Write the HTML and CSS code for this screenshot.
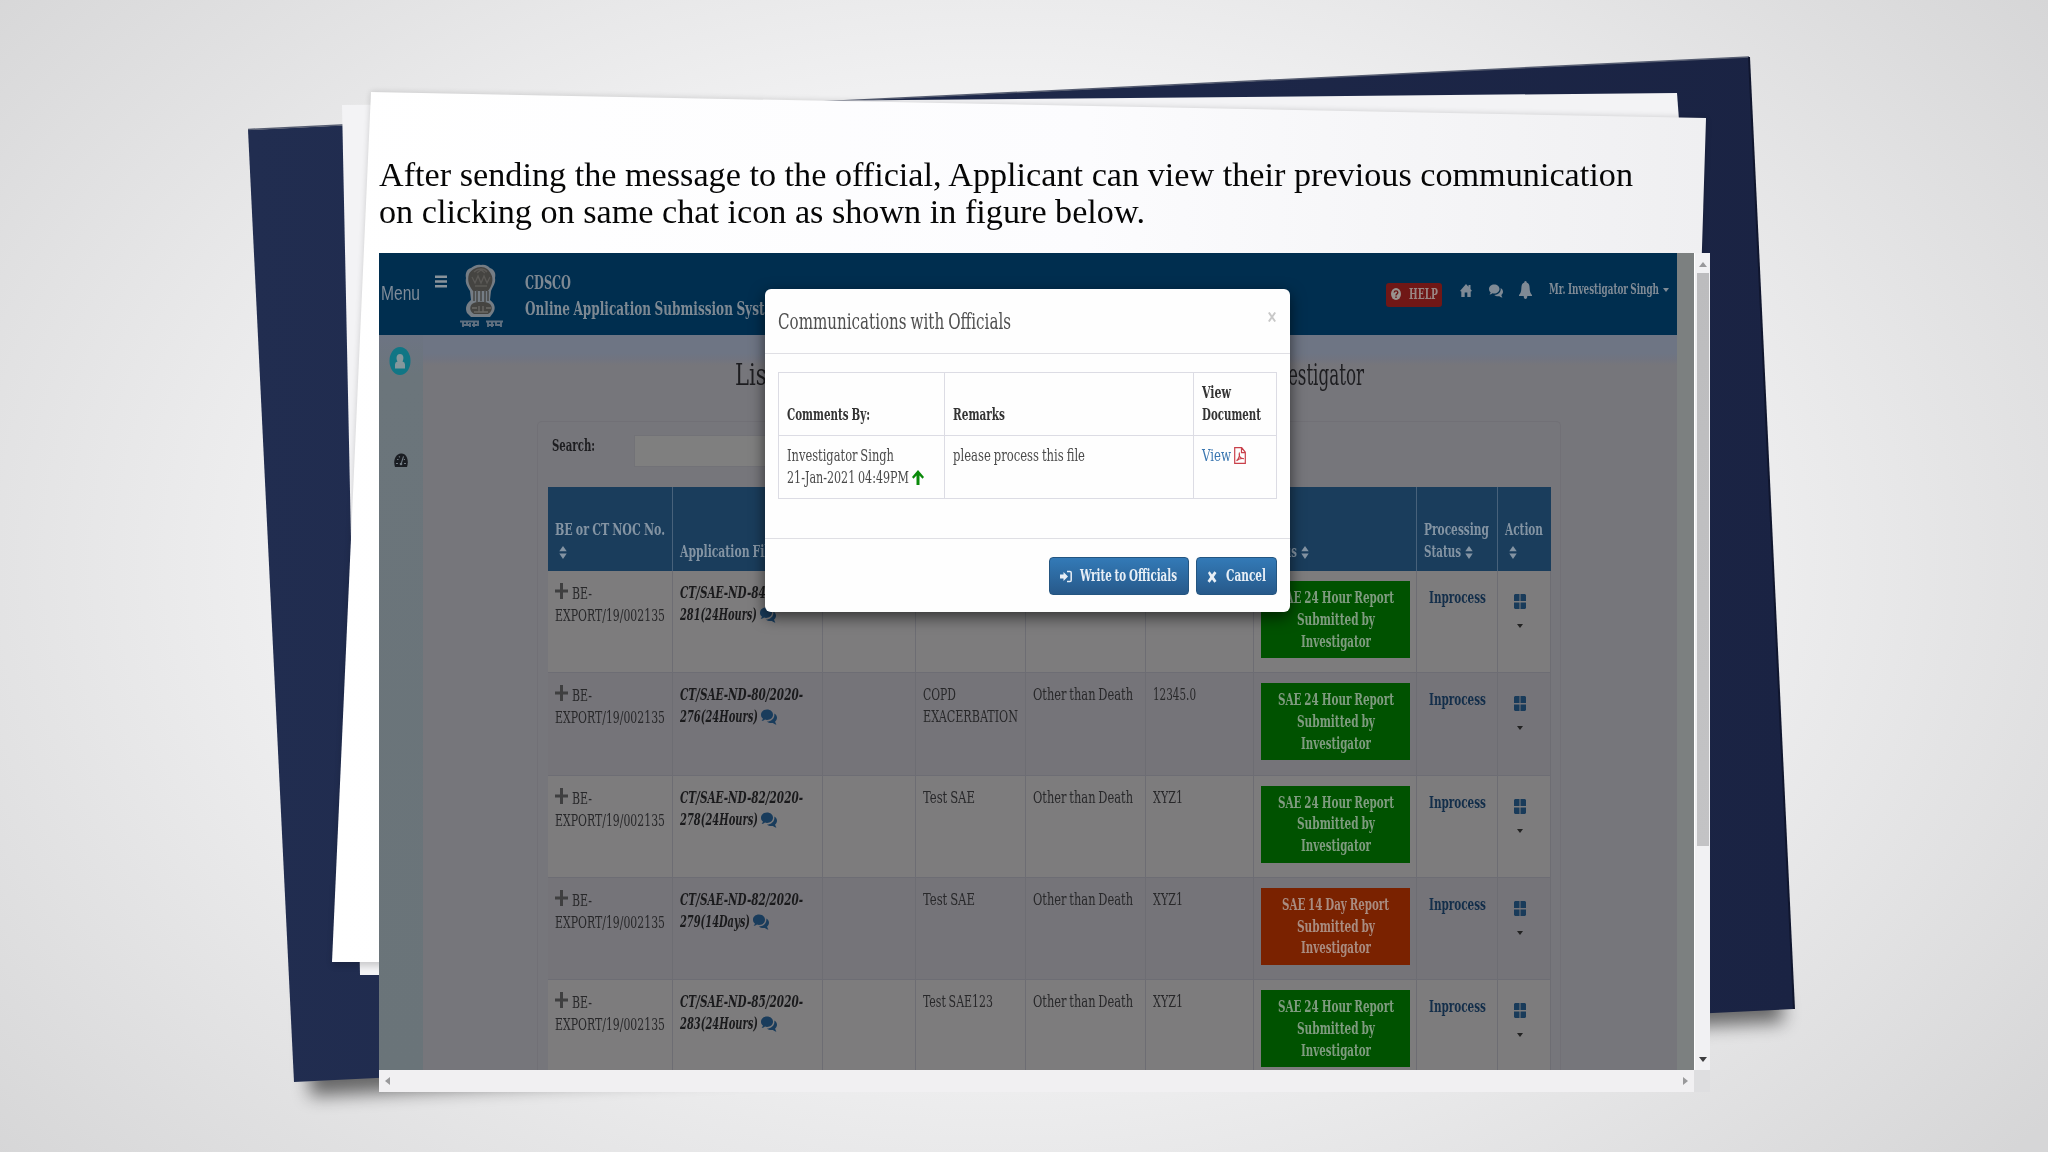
FILE: index.html
```html
<!DOCTYPE html>
<html lang="en">
<head>
<meta charset="utf-8">
<title>Communications with Officials</title>
<link rel="stylesheet" href="styles.css">
</head>
<body>
<svg width="0" height="0" class="defs">
  <symbol id="sort" viewBox="0 0 8 14"><path d="M4 0L8 5.6H0zM0 8.2h8L4 14z"/></symbol>
  <symbol id="plus" viewBox="0 0 13 16"><path d="M5 0h3v6.4h5v3.2H8V16H5V9.600H0V6.400h5z"/></symbol>
  <symbol id="chat" viewBox="0 0 16 16"><path d="M6 0.500c3.400 0 6 2.200 6 5.200s-2.600 5.200-6 5.200c-.7 0-1.400-.1-2-.3C3 11.500 1.700 12 .6 12c.7-.8 1.200-1.600 1.300-2.500C.7 8.600 0 7.300 0 5.700 0 2.700 2.600.5 6 .5z"/><path d="M13.200 4.500C15 5.500 16 7 16 8.800c0 1.500-.7 2.800-1.900 3.800.1.900.6 1.900 1.300 2.900-1.300-.1-2.500-.7-3.500-1.600-2 .5-4.400.1-5.900-1.400 4-.1 7.400-2.800 7.400-6.800 0-.4-.1-.8-.2-1.200z"/></symbol>
  <symbol id="grid" viewBox="0 0 12 15"><path d="M1 0h4.500v7H0V1zM6.500 0H11l1 1v6H6.500zM0 8.500h5.500V15H1l-1-1zM6.500 8.500H12V14l-1 1H6.500z"/></symbol>
</svg>
<main class="slide">
  <svg class="papers" viewBox="0 0 2048 1152">
    <defs>
      <linearGradient id="navy" x1="0" y1="0" x2="1" y2="0"><stop offset="0" stop-color="#212d50"/><stop offset="1" stop-color="#1a2343"/></linearGradient>
      <linearGradient id="front" x1="0" y1="0" x2="1" y2="0"><stop offset="0" stop-color="#fff"/><stop offset=".55" stop-color="#fcfcfe"/><stop offset="1" stop-color="#efeff1"/></linearGradient>
      <filter id="soft" x="-10%" y="-10%" width="120%" height="120%"><feGaussianBlur stdDeviation="9"/></filter>
      <filter id="thin" x="-10%" y="-10%" width="120%" height="120%"><feGaussianBlur stdDeviation="3"/></filter>
    </defs>
    <polygon points="300,700 1740,700 1784,1022 310,1096" fill="#000" opacity=".55" filter="url(#soft)"/>
    <polygon points="248,130 1749,57 1794,1009 294,1082" fill="url(#navy)"/>
    <polyline points="248,129.500 1749,57" fill="none" stroke="#555c70" stroke-width="1.500"/>
    <polyline points="1749,57 1794,1009" fill="none" stroke="#10162e" stroke-width="2"/>
    <polygon points="342,105 1677,93 1679,120 1679,975 360,975" fill="#f3f3f5"/>
    <polygon points="371,92 1706,118 1680,966 332,966" fill="#000" opacity=".16" filter="url(#thin)"/>
    <polygon points="371,92 1706,118 1680,962 332,962" fill="url(#front)"/>
  </svg>
  <h1 class="caption"><span data-w="1254">After sending the message to the official, Applicant can view their previous communication</span><br><span data-w="766">on clicking on same chat icon as shown in figure below.</span></h1>

  <div class="frame">
    <div class="page">
      <header class="top">
        <span class="menu" data-w="39">Menu</span>
        <svg class="burger" viewBox="0 0 12 12"><path d="M0 0h12v2.600H0zM0 4.700h12v2.600H0zM0 9.400h12V12H0z"/></svg>
        <svg class="emblem" viewBox="0 0 44 66">
          <path d="M21 1c4-1 7 1 9 3 5 2 6 6 5 10 1 5-2 8-4 13l-1 9c5 4 6 8 3 13l-3 4H11l-4-4c-2-5-1-9 4-13l-1-9C7 22 5 19 6 14 5 9 7 5 11 4c3-2 6-4 10-3z" fill="#757d85"/>
          <path d="M21 3c5 0 8 3 10 7 3 5 1 12-3 17H13C9 22 7 16 9 10c2-4 7-7 12-7z" fill="#454441"/>
          <path d="M14 8c4-4 10-4 13 0M12 13l3 6 3-7 3 7 3-7 3 7 3-6M15 22h12M17 9l4-3 4 3" fill="none" stroke="#5b5956" stroke-width="1.300"/>
          <path d="M14 27v10M17 26v12M21 27v10M25 26v12M28 27v10" stroke="#4c4d4c" stroke-width="1.700"/>
          <path d="M12 40c4-3 14-3 18 0 3 3 2 8-2 10H14c-4-2-5-7-2-10z" fill="#454441"/>
          <path d="M12 44h5m2-2v6m4-6v6m3-4h5M14 48h14" stroke="#6b6966" stroke-width="1.300" fill="none"/>
          <path d="M0 57.500h19M26 57.500h17M3 57v6M7 57v5M10 59v4M14 57v6M18 57v5M28 58v5M32 57v6M36 57v5M41 57v6M2 61h8M12 61h5M28 61h6M36 61h5" stroke="#5f6f7f" stroke-width="1.900" fill="none"/>
        </svg>
        <div class="brand"><div><span data-w="46">CDSCO</span></div><div><span data-w="260">Online Application Submission System</span></div></div>
        <div class="tools">
          <span class="help"><svg viewBox="0 0 10 12"><ellipse cx="5" cy="6" rx="5" ry="6" fill="#99928e"/><path d="M3.200 4.500C3.300 2.300 6.800 2.300 6.800 4.500 6.800 6 5 5.800 5 7.500M5 8.500v1.500" fill="none" stroke="#6b1513" stroke-width="1.400"/></svg><b data-w="29">HELP</b></span>
          <svg class="home" viewBox="0 0 12 13"><path d="M6 0l2.500 2.800V1h2v4L12 7l-1.300.5V13H7.300V8.500H4.700V13H1.300V7.500L0 7z"/></svg>
          <svg class="talk"><use href="#chat"/></svg>
          <svg class="bell" viewBox="0 0 13 18"><path d="M6.500 0c1 0 1.200.8 1.200 1.600C9.800 2.300 10.500 4 10.600 6.500c.1 4 .9 6 2.400 7.500v1H8.300c0 1.800-.7 3-1.800 3s-1.800-1.200-1.800-3H0v-1c1.500-1.500 2.300-3.500 2.400-7.500C2.500 4 3.200 2.300 5.300 1.600 5.300.8 5.500 0 6.500 0z"/></svg>
          <b class="user" data-w="110">Mr. Investigator Singh</b><i class="caret"></i>
        </div>
      </header>
      <div class="main">
        <nav class="side">
          <svg class="avatar" viewBox="0 0 22 28"><ellipse cx="11" cy="14" rx="10.500" ry="14" fill="#117685"/><path d="M6 21.500v-4q0-2.500 2.500-3C7 12 7 7 11 7s4 5 2.500 7.500q2.500.5 2.500 3v4z" fill="#85979c"/></svg>
          <svg class="dash" viewBox="0 0 14 14"><path d="M1 14C-1 8 1 1 7 .500S15 8 13 14z" fill="#1a1d22"/><path d="M3 6.500h1.500M5 3.300l.8 1M9.500 3.300L7.400 10M11 6.500H9.800M2 10.500h2M12 10.500h-2" stroke="#717b83" stroke-width="1.100"/><circle cx="7" cy="11" r="1.300" fill="#717b83"/></svg>
        </nav>
        <section class="panel">
          <h2 class="title"><span data-w="40">List</span><span data-w="103">Investigator</span></h2>
          <div class="box">
            <div class="search"><b data-w="43">Search:</b><span class="input"></span></div>
            <div class="row head">
              <div><span data-w="110">BE or CT NOC No.</span><svg class="sort in"><use href="#sort"/></svg></div>
              <div><span data-w="119">Application File No.</span></div><div></div><div></div><div></div><div></div>
              <div><span data-w="36">Status</span><svg class="sort"><use href="#sort"/></svg></div>
              <div><span data-w="65">Processing</span><span data-w="37">Status</span><svg class="sort"><use href="#sort"/></svg></div>
              <div><span data-w="38">Action</span><svg class="sort in"><use href="#sort"/></svg></div>
            </div>
            <div id="rows"></div>
          </div>
        </section>
      </div>
      <div class="modal">
        <div class="mhead"><span data-w="233">Communications with Officials</span><svg viewBox="0 0 8 10"><path d="M.8.500l6.400 9M7.200.500L.8 9.500" stroke="#c8c8c8" stroke-width="1.900"/></svg></div>
        <div class="mbody">
          <div class="mrow mth"><div><span data-w="83">Comments By:</span></div><div><span data-w="52">Remarks</span></div><div><span data-w="29">View</span><br><span data-w="59">Document</span></div></div>
          <div class="mrow"><div><span data-w="107">Investigator Singh</span><br><span data-w="122">21-Jan-2021 04:49PM</span><svg class="up" viewBox="0 0 12 15"><path d="M6 0l6 7-1.500 1.800L7.500 5.500V15h-3V5.500l-3 3.300L0 7z"/></svg></div>
            <div><span data-w="132">please process this file</span></div>
            <div class="link"><span data-w="29">View</span><svg class="pdf" viewBox="0 0 12 17"><path d="M.7.700h7l3.600 4.600v11H.7zM7.500.700v5h3.800M2.500 13.800C5 11.500 6 8 5.300 6.500c-.8 2.500 1.500 5.500 4.500 5.200-2-.5-5 .2-7.300 2.100z"/></svg></div></div>
        </div>
        <div class="mfoot">
          <span class="btn"><svg class="signin" viewBox="0 0 12 13"><path d="M0 4.500h3.500V2L8 6.500 3.500 11V8.500H0z"/><path d="M7 1.500h3q1.200 0 1.200 1.300v7.400q0 1.300-1.200 1.300H7" fill="none" stroke="#e8eff6" stroke-width="1.500"/></svg><b data-w="97">Write to Officials</b></span>
          <span class="btn c"><svg class="cross" viewBox="0 0 10 12"><path d="M1 2l1.600-1.800L5 3.500 7.400.200 9.500 2 6.800 6l2.700 4-2.100 1.800L5 8.500l-2.400 3.300L.5 10l2.700-4z"/></svg><b data-w="40">Cancel</b></span>
        </div>
      </div>
    </div>
    <div class="vbar"><i class="tri u"></i><span class="thumb"></span><i class="tri d"></i></div>
    <div class="hbar"><i class="tri l"></i><i class="tri r"></i></div>
    <div class="corner"></div>
  </div>
</main>
<script src="app.js"></script>
</body>
</html>
```
FILE: styles.css
```css
* { box-sizing: border-box; }
body { margin: 0; font-family: "DejaVu Serif", serif; font-stretch: condensed; }
.defs { position: absolute; }
svg { display: block; flex: none; }
.fit { display: inline-block; white-space: nowrap; vertical-align: top; }
.fit > span { display: inline-block; transform-origin: 0 0; word-spacing: -1px; }

.slide {
  position: relative; width: 2048px; height: 1152px; overflow: hidden; padding: 156px 0 0 379px;
  background: radial-gradient(ellipse 1150px 800px at 1000px 560px, #f4f4f4 0%, #f0f0f1 60%, #e4e4e5 85%, #d6d6d7 115%);
}
.papers { position: absolute; inset: 0; width: 2048px; height: 1152px; }
.caption { position: relative; margin: 0; height: 97px; font: 400 34px/37px "Liberation Serif", serif; color: #060606; }
.caption .fit > span { word-spacing: 0; }

.frame { position: relative; width: 1331px; display: grid; grid-template: 817px 22px / 1315px 16px; background: #fff; }
.page { position: relative; height: 817px; overflow: hidden; background: #7c8080; }
.top { width: 1298px; height: 82px; background: #002e4f; display: flex; align-items: flex-start; padding-left: 2px; }
.menu { font: 400 20px/24px "Liberation Sans", sans-serif; color: #7f8b98; margin-top: 28px; }
.burger { width: 12px; height: 13px; margin: 22px 0 0 15px; fill: #89939b; }
.emblem { width: 44px; height: 66px; margin: 11px 0 0 13px; }
.brand { margin: 17px 0 0 21px; width: 300px; flex: none; font-weight: 700; font-size: 18px; line-height: 26px; color: #7e8993; }
.tools { display: flex; margin-left: auto; padding-right: 8px; color: #7f8a95; fill: #7f8a95; font-size: 14px; line-height: 20px; }
.help { display: flex; width: 56px; height: 24px; margin-top: 30px; padding: 1px 0 0 5px; background: #701716; border-radius: 3px; color: #9a8583; }
.help svg { width: 10px; height: 12px; margin: 4px 8px 0 0; }
.home { width: 12px; height: 13px; margin: 31px 0 0 18px; }
.talk { width: 14px; height: 14px; margin: 31px 0 0 17px; }
.bell { width: 13px; height: 18px; margin: 28px 0 0 16px; }
.user { margin: 26px 0 0 17px; }
.caret { border: 3px solid transparent; border-top: 4px solid; border-bottom: 0; margin: 35px 0 0 4px; }

.main { display: flex; width: 1298px; background: linear-gradient(#6e7584 0 18px, #717480 24px, #76767b 30px); height: 735px; }
.side { width: 44px; padding-left: 10px; background: linear-gradient(#6d7483, #6b757b 40px, #6a7479); }
.avatar { width: 22px; height: 28px; margin-top: 12px; }
.dash { width: 14px; height: 14px; margin: 78px 0 0 5px; }
.panel { flex: 1; padding-top: 20px; color: #1d1d20; }
.title { margin: 0 0 0 312px; width: 629px; height: 66px; display: flex; justify-content: space-between; font-weight: 400; font-size: 30px; line-height: 39px; }
.box { width: 1024px; margin-left: 114px; padding: 12px 0 0 10px; height: 660px; border: 1px solid #717076; border-bottom: 0; border-radius: 5px 5px 0 0; }
.search { display: flex; height: 53px; padding-left: 4px; font-size: 16px; line-height: 22px; }
.search b { margin-top: 1px; }
.input { width: 240px; height: 32px; margin: 1px 0 0 39px; background: #7f7f7f; border: 1px solid #727277; }

.row { display: grid; grid-template-columns: 125px 150px 93px 110px 120px 108px 163px 81px 53px; width: 1003px; height: 102.300px; font-size: 16px; line-height: 22px; color: #28282a; background: #7d7c7d; border-bottom: 1px solid #6d6d74; }
.row:nth-child(even) { background: #757479; }
.row > div { padding: 11px 0 0 7px; border-right: 1px solid #6d6d73; white-space: nowrap; }
.row > div:first-child { padding-top: 12px; }
.row.head { height: 84px; background: #1a3d5c; border: 0; color: #8494a3; font-weight: 700; }
.row.head > div { display: flex; flex-wrap: wrap; align-content: flex-end; padding: 0 0 8px 7px; border-color: #48627b; }
.row.head > div:last-child { border: 0; }
.sort { width: 8px; height: 13px; margin: 5px 0 4px 4px; fill: #8494a3; }
.l1 { display: flex; }
.plus { width: 13px; height: 16px; margin: 0 4px 0 0; fill: #3f3f40; }
.file { font-weight: 700; font-style: italic; color: #1a1a1c; }
.bubble { width: 16px; height: 16px; margin: 3px 0 0 3px; fill: #193c5c; }
.row > div.stat { padding: 10px 0 0 7px; }
.tag { width: 149px; height: 77px; padding-top: 6px; background: #005200; color: #7f9b7f; font-weight: 700; text-align: center; line-height: 21.800px; }
.tag.red { background: #7a2200; color: #a98c80; }
.row > div.proc { padding: 16px 0 0 12px; color: #132e4a; font-weight: 700; }
.row > div.act { padding: 23px 0 0 16px; }
.gridi { width: 12px; height: 15px; fill: #193b5a; }
.act .caret { display: block; width: 0; margin: 15px 0 0 3px; color: #222; }

.modal { position: absolute; left: 386px; top: 36px; width: 525px; height: 323px; background: #fefefe; border-radius: 6px; box-shadow: 0 5px 15px rgba(0,0,0,.6); color: #4a4a4a; font-size: 16px; line-height: 22px; }
.mhead { display: flex; justify-content: space-between; height: 65px; padding: 17px 14px 0 13px; border-bottom: 1px solid #dfdfe4; font-size: 21.500px; line-height: 32px; color: #505050; }
.mhead svg { width: 8px; height: 10px; margin-top: 6px; }
.mbody { margin: 18px 0 0 13px; width: 499px; height: 127px; border: 1px solid #dcdce4; }
.mrow { display: grid; grid-template-columns: 166px 249px 82px; height: 62px; }
.mrow > div { padding: 9px 0 0 8px; border-right: 1px solid #dcdce4; }
.mrow > div:last-child { border: 0; }
.mth { height: 63px; border-bottom: 1px solid #dcdce4; font-weight: 700; color: #333; }
.mth > div { padding-top: 31px; }
.mth > div:last-child { padding-top: 9px; }
.up { display: inline-block; width: 12px; height: 15px; margin: 3px 0 0 3px; fill: #0a8a0a; vertical-align: top; }
.mrow > div.link { display: flex; color: #3a76b0; }
.pdf { width: 12px; height: 17px; margin: 2px 0 0 3px; fill: none; stroke: #c9404a; stroke-width: 1.200; }
.mfoot { display: flex; justify-content: flex-end; gap: 7px; margin-top: 39px; padding: 18px 13px 0 0; border-top: 1px solid #dfdfe4; }
.btn { display: flex; width: 140px; height: 38px; padding: 7px 0 0 10px; border: 1px solid #245580; border-radius: 4px; background: linear-gradient(#337ab7, #27598a); color: #e8eff6; fill: #e8eff6; }
.btn.c { width: 81px; }
.signin { width: 12px; height: 13px; margin: 5px 8px 0 0; }
.cross { width: 10px; height: 12px; margin: 6px 9px 0 0; }

.vbar { position: relative; display: flex; flex-direction: column; align-items: center; background: #f1f1f3; border-left: 1px solid #fff; }
.thumb { width: 12px; height: 573px; margin-top: 6px; background: linear-gradient(#bcbcbe, #c3c3c5); }
.tri { display: block; width: 0; height: 0; border: 4px solid transparent; }
.tri.u { border-bottom: 5px solid #99999b; border-top: 0; margin-top: 9px; }
.tri.d { border-top: 5px solid #3f3f41; border-bottom: 0; margin: auto 0 8px; }
.hbar { display: flex; align-items: center; justify-content: space-between; padding: 0 6px; background: #f1f0f2; }
.tri.l { border-right: 5px solid #99999b; border-left: 0; }
.tri.r { border-left: 5px solid #99999b; border-right: 0; }
.corner { background: #dedee0; }
```
FILE: app.js
```js
const records = [
  { file: ["CT/SAE-ND-84/2020-", "281(24Hours)", 77], term: [], outcome: "", code: ["", 0], tag: "24 Hour" },
  { file: ["CT/SAE-ND-80/2020-", "276(24Hours)", 78], term: [["COPD", 33], ["EXACERBATION", 95]], outcome: "Other than Death", code: ["12345.0", 43], tag: "24 Hour" },
  { file: ["CT/SAE-ND-82/2020-", "278(24Hours)", 78], term: [["Test SAE", 52]], outcome: "Other than Death", code: ["XYZ1", 30], tag: "24 Hour" },
  { file: ["CT/SAE-ND-82/2020-", "279(14Days)", 70], term: [["Test SAE", 52]], outcome: "Other than Death", code: ["XYZ1", 30], tag: "14 Day" },
  { file: ["CT/SAE-ND-85/2020-", "283(24Hours)", 78], term: [["Test SAE123", 70]], outcome: "Other than Death", code: ["XYZ1", 30], tag: "24 Hour" }
];
const t = (text, w) => text ? `<span data-w="${w}">${text}</span>` : "";
document.getElementById("rows").innerHTML = records.map(r => `
  <div class="row">
    <div><div class="l1"><svg class="plus"><use href="#plus"/></svg>${t("BE-", 20)}</div>${t("EXPORT/19/002135", 110)}</div>
    <div class="file">${t(r.file[0], 123)}<div class="l1">${t(r.file[1], r.file[2])}<svg class="bubble"><use href="#chat"/></svg></div></div>
    <div></div>
    <div>${r.term.map(x => t(x[0], x[1])).join("<br>")}</div>
    <div>${t(r.outcome, 100)}</div>
    <div>${t(r.code[0], r.code[1])}</div>
    <div class="stat"><div class="tag ${r.tag === "14 Day" ? "red" : ""}">${t("SAE " + r.tag + " Report", r.tag === "14 Day" ? 107 : 116)}<br>${t("Submitted by", 78)}<br>${t("Investigator", 70)}</div></div>
    <div class="proc">${t("Inprocess", 57)}</div>
    <div class="act"><svg class="gridi"><use href="#grid"/></svg><i class="caret"></i></div>
  </div>`).join("");

document.querySelectorAll("[data-w]").forEach(el => {
  const inner = document.createElement("span");
  inner.textContent = el.textContent;
  el.textContent = "";
  el.append(inner);
  el.classList.add("fit");
  const w = +el.dataset.w;
  inner.style.transform = `scaleX(${w / inner.getBoundingClientRect().width})`;
  el.style.width = w + "px";
});
```
